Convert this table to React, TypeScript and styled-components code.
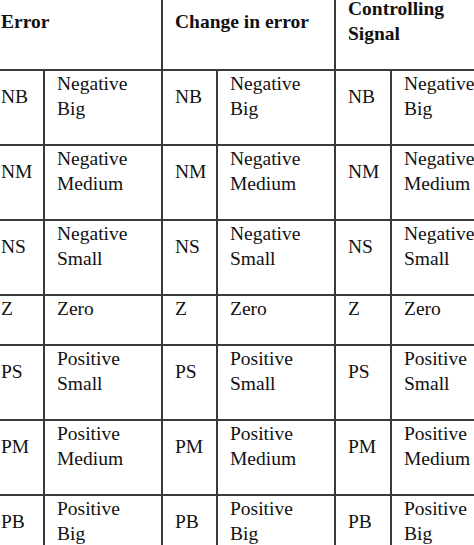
import React from 'react';
import styled, { createGlobalStyle } from 'styled-components';

const lineColor = '#3a3a3a';
const textColor = '#111111';

const GlobalStyle = createGlobalStyle`
  html, body {
    margin: 0;
    padding: 0;
    background: #ffffff;
  }
`;

const Viewport = styled.div`
  width: 474px;
  height: 545px;
  overflow: hidden;
  background: #ffffff;
`;

const Table = styled.table`
  border-collapse: collapse;
  table-layout: fixed;
  width: 521px;
  margin: -6px 0 0 -13px;
  font-family: 'Liberation Serif', 'Times New Roman', serif;
  font-size: 19.5px;
  line-height: 25px;
  color: ${textColor};
`;

const Col = styled.col<{ $w: number }>`
  width: ${(p) => p.$w}px;
`;

const HeadCell = styled.th`
  border: 2px solid ${lineColor};
  padding: 0 8px 23px 12px;
  text-align: left;
  vertical-align: middle;
  font-weight: bold;
`;

const Cell = styled.td`
  border: 2px solid ${lineColor};
  padding: 0 6px 23px 12px;
  text-align: left;
  vertical-align: middle;
  white-space: nowrap;
`;

const TextCell = styled(Cell)`
  white-space: normal;
`;

const rows: [string, string][] = [
  ['NB', 'Negative Big'],
  ['NM', 'Negative Medium'],
  ['NS', 'Negative Small'],
  ['Z', 'Zero'],
  ['PS', 'Positive Small'],
  ['PM', 'Positive Medium'],
  ['PB', 'Positive Big'],
];

const splitLabel = (label: string) => {
  const parts = label.split(' ');
  return parts.map((p, i) => (
    <React.Fragment key={i}>
      {p}
      {i < parts.length - 1 && <br />}
    </React.Fragment>
  ));
};

const App: React.FC = () => {
  return (
    <>
      <GlobalStyle />
      <Viewport>
        <Table>
          <colgroup>
            <Col $w={56} />
            <Col $w={118} />
            <Col $w={55} />
            <Col $w={118} />
            <Col $w={56} />
            <Col $w={118} />
          </colgroup>
          <thead>
            <tr>
              <HeadCell colSpan={2}>Error</HeadCell>
              <HeadCell colSpan={2}>Change in error</HeadCell>
              <HeadCell colSpan={2}>
                Controlling
                <br />
                Signal
              </HeadCell>
            </tr>
          </thead>
          <tbody>
            {rows.map(([abbr, label]) => (
              <tr key={abbr}>
                <Cell>{abbr}</Cell>
                <TextCell>{splitLabel(label)}</TextCell>
                <Cell>{abbr}</Cell>
                <TextCell>{splitLabel(label)}</TextCell>
                <Cell>{abbr}</Cell>
                <TextCell>{splitLabel(label)}</TextCell>
              </tr>
            ))}
          </tbody>
        </Table>
      </Viewport>
    </>
  );
};

export default App;
